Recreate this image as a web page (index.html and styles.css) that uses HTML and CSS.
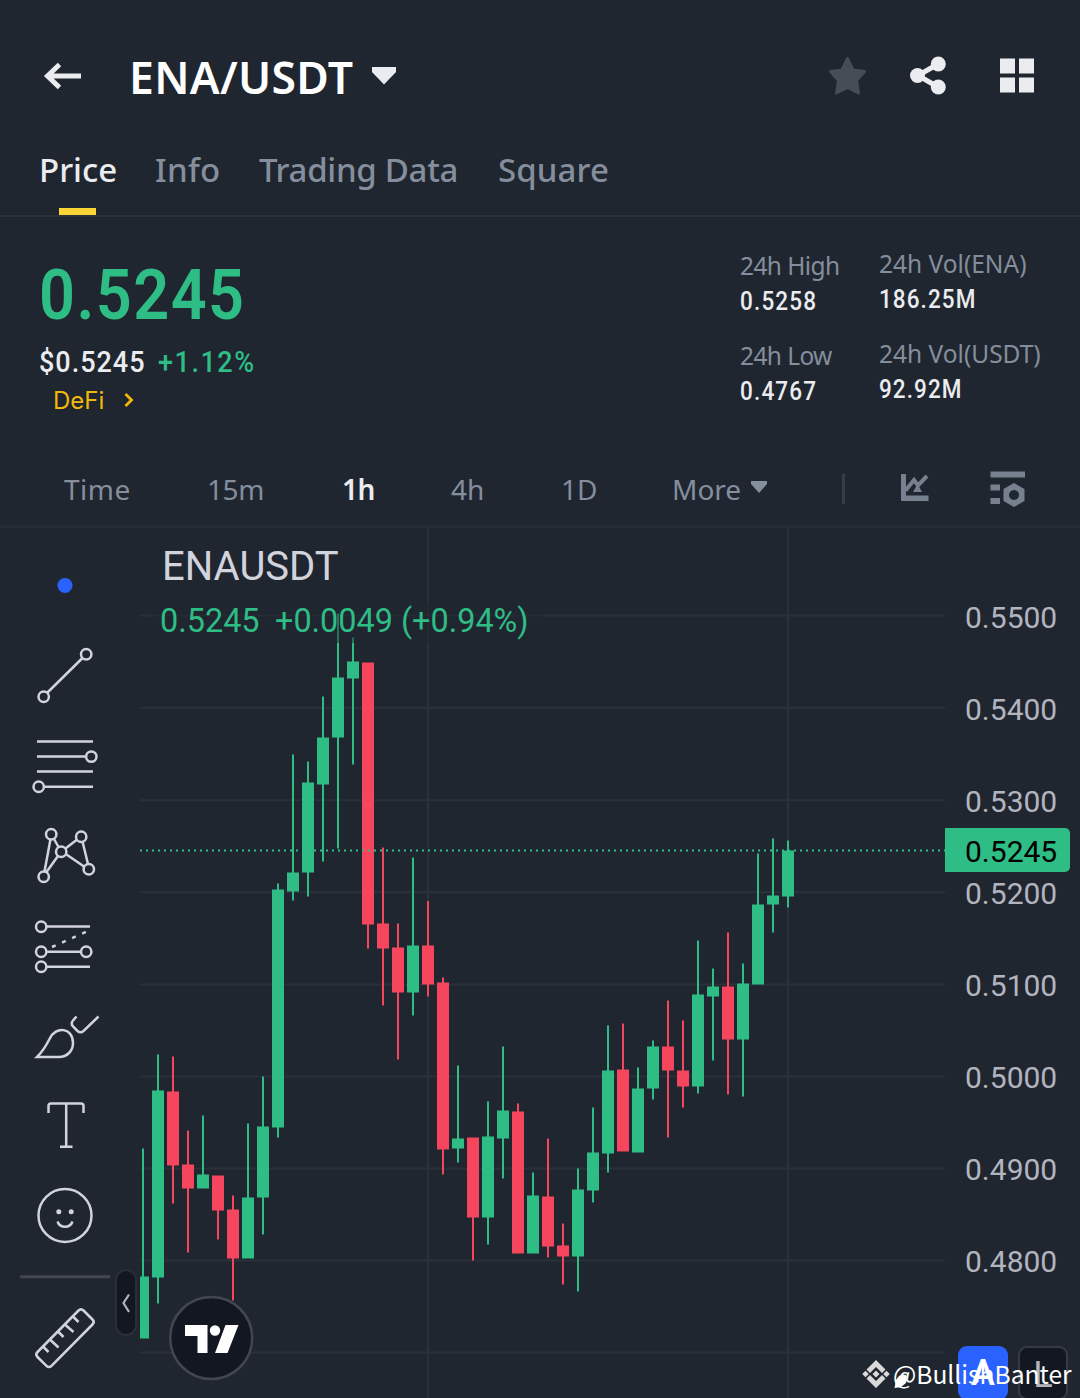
FILE: index.html
```html
<!DOCTYPE html>
<html lang="en">
<head>
<meta charset="utf-8">
<title>ENA/USDT</title>
<link rel="stylesheet" href="styles.css">
</head>
<body>
<main class="app">
  <header class="topbar">
    <svg class="back" width="40" height="34" viewBox="42 59 40 34"><path d="M81 76H49M59.500 64.500L47.500 76L59.500 87.500" fill="none" stroke="#eaecef" stroke-width="5"/></svg>
    <h1 class="pair">ENA/USDT</h1>
    <svg class="caret" width="26" height="20" viewBox="371 66 26 20"><path d="M372 67H396V72L384 84.500L372 72Z" fill="#eaecef"/></svg>
    <div class="actions">
      <svg width="40" height="42" viewBox="828 55.500 40 42"><path d="M847.500 59L853 70.500L864.500 72L856.500 81L858.500 93.500L847.500 88L836.500 93.500L838.500 81L830.500 72L842 70.500Z" fill="#474d57" stroke="#474d57" stroke-width="3" stroke-linejoin="round"/></svg>
      <svg width="40" height="42" viewBox="908 55 40 42"><path d="M938 64L918 75.500L938 87" fill="none" stroke="#eaecef" stroke-width="5"/><circle cx="938.300" cy="64" r="7.500" fill="#eaecef"/><circle cx="917.500" cy="75.500" r="7.500" fill="#eaecef"/><circle cx="938.300" cy="87" r="7.500" fill="#eaecef"/></svg>
      <svg width="36" height="36" viewBox="999 58 36 36"><path d="M1000 58.500h15v15h-15zM1019 58.500h15v15h-15zM1000 77.500h15v15h-15zM1019 77.500h15v15h-15z" fill="#eaecef"/></svg>
    </div>
  </header>

  <nav class="tabs">
    <a class="tab tab-price active">Price</a>
    <a class="tab tab-info">Info</a>
    <a class="tab tab-data">Trading Data</a>
    <a class="tab tab-square">Square</a>
  </nav>

  <section class="summary">
    <div class="quote">
      <div class="last">0.5245</div>
      <div class="fiat"><span class="usd">$0.5245</span><span class="change">+1.12%</span></div>
      <div class="tag"><span>DeFi</span><svg width="12" height="16" viewBox="122 394 12 16"><path d="M125.500 395L131.500 401L125.500 407" fill="none" stroke="#f0b90b" stroke-width="2.800"/></svg></div>
    </div>
    <div class="stats stats-range">
      <div class="stat"><span class="label">24h High</span><span class="value">0.5258</span></div>
      <div class="stat"><span class="label">24h Low</span><span class="value">0.4767</span></div>
    </div>
    <div class="stats stats-volume">
      <div class="stat"><span class="label">24h Vol(ENA)</span><span class="value">186.25M</span></div>
      <div class="stat"><span class="label">24h Vol(USDT)</span><span class="value">92.92M</span></div>
    </div>
  </section>

  <nav class="intervals">
    <span class="iv iv-time">Time</span>
    <span class="iv iv-15m">15m</span>
    <span class="iv iv-1h active">1h</span>
    <span class="iv iv-4h">4h</span>
    <span class="iv iv-1d">1D</span>
    <span class="iv iv-more">More<svg width="18" height="14" viewBox="750 482 18 14"><path d="M751 482H767V485L759 494L751 485Z" fill="#848e9c"/></svg></span>
    <i class="sep"></i>
    <svg class="tool-style" width="28" height="30" viewBox="901 474.500 28 30"><path d="M901 474.500h5v21.500h22.500v5.500H901z" fill="#76808f"/><path d="M905.500 491L914 480.500L918 486L927 476.500" fill="none" stroke="#76808f" stroke-width="4"/><path d="M917.500 484.500L922 492.500H913Z" fill="#76808f"/></svg>
    <svg class="tool-settings" width="36" height="38" viewBox="990 470 36 38"><path d="M990.500 471.500H1025v6H990.500zM990.500 484.500h9.500v6h-9.500zM990.500 498h9.500v6h-9.500z" fill="#76808f"/><path fill-rule="evenodd" d="M1014 483L1024.500 489V501L1014 507L1003.500 501V489ZM1014 490a5 5 0 1 0 .01 0z" fill="#76808f"/></svg>
  </nav>

  <section class="chart">
    <aside class="drawbar">
      <svg class="tool" viewBox="0 540 140 90"><circle cx="65" cy="585.500" r="7.500" fill="#2962ff"/></svg>
      <svg class="tool" viewBox="0 630 140 90"><path d="M47.500 692.500L82.500 658"/><circle cx="86.200" cy="654.300" r="5.200"/><circle cx="43.700" cy="696.700" r="5.200"/></svg>
      <svg class="tool" viewBox="0 720 140 90"><path d="M37 741.500H93M37 756.500H86M37 771.500H93M44 786.700H93"/><circle cx="91.300" cy="756.600" r="5.200"/><circle cx="38.700" cy="786.700" r="5.200"/></svg>
      <svg class="tool" viewBox="0 810 140 90"><path d="M50.500 839L44.500 871.500M54 839L58.500 847M65.500 848.500L76.500 840M58 856L46.500 872M66.500 854.500L84 866.500M82.500 841.500L88 864"/><circle cx="51.200" cy="834.200" r="5.200"/><circle cx="81.200" cy="836.700" r="5.200"/><circle cx="61.200" cy="851.800" r="5.200"/><circle cx="43.700" cy="876.700" r="5.200"/><circle cx="88.800" cy="869.300" r="5.200"/></svg>
      <svg class="tool" viewBox="0 900 140 90"><path d="M47 926.500H90M47 951.800H80M47 966.800H90"/><path d="M52 947L88 931" stroke-dasharray="4 7"/><circle cx="41.200" cy="926.700" r="5.200"/><circle cx="41.200" cy="951.700" r="5.200"/><circle cx="86.200" cy="951.700" r="5.200"/><circle cx="41.200" cy="966.800" r="5.200"/></svg>
      <svg class="tool" viewBox="0 990 140 90"><path d="M37 1057C44 1050 46 1046 49.500 1039C55 1026 73 1027 73 1043C73 1051 67 1057 59 1057ZM76.500 1016.500L73 1020.500Q70.500 1023.500 73 1026.500L77.500 1031Q80.500 1033.500 83.500 1031L98.500 1016.500"/></svg>
      <svg class="tool" viewBox="0 1080 140 90"><path d="M48.500 1113V1106Q48.500 1103.500 51 1103.500H81Q83.500 1103.500 83.500 1106V1113M66.200 1104V1146.500M60 1146.800H72.500"/></svg>
      <svg class="tool" viewBox="0 1170 140 90"><circle cx="65" cy="1215.500" r="26.500"/><circle cx="58.800" cy="1211.800" r="2.500" class="dot"/><circle cx="71.200" cy="1211.800" r="2.500" class="dot"/><path d="M57.500 1221.500C60 1228.500 70 1228.500 72.500 1221.500"/></svg>
      <svg class="tool tool-last" viewBox="0 1260 140 138"><path d="M20 1276.800H110" stroke="#434651" stroke-width="3"/><path d="M78.500 1310.500Q81 1308.200 83.500 1310.500L92.500 1319.500Q95 1322 92.500 1324.500L51.500 1365.800Q49 1368.200 46.500 1365.800L37.500 1357Q35 1354.500 37.500 1352ZM43.500 1347L48.500 1352M50.500 1340L58.500 1347.500M58.500 1332L63.500 1337M65.500 1325L73.500 1332M73.500 1317L78.500 1322"/></svg>
      <div class="collapse"><svg width="10" height="20" viewBox="121 1292 10 20"><path d="M129 1293.500L123.500 1302L129 1311" fill="none" stroke="#b2b5be" stroke-width="2.200"/></svg></div>
    </aside>

    <div class="plot">
      <svg class="candles" viewBox="140 528 805 870">
        <path class="grid" d="M140 615.500H945M140 707.700H945M140 800.300H945M140 892.300H945M140 984.500H945M140 1076.500H945M140 1168.500H945M140 1260.500H945M140 1352.500H945M428 528V1398M788 528V1398"/>
        <path class="up wick" d="M143 1148.500V1338M158 1054.500V1303.500M203 1115.500V1188M248 1123.500V1258M263 1076.500V1234.500M278 883.500V1137.500M293 754.500V900.500M308 761.500V896.500M323 696.500V861.500M338 613.500V848.500M353 637.500V764.500M413 857.500V1015.500M458 1065.500V1162.500M488 1101.500V1244.500M503 1046.500V1178.500M533 1172.500V1253M578 1168.500V1291.500M593 1107.500V1202.500M608 1025.500V1172.500M638 1067.500V1152M653 1040.500V1099.500M698 940.500V1093.500M713 968.500V1060.500M743 963.500V1096.500M758 853.500V984M773 838.500V932.500M788 840.500V907.500"/>
        <path class="up body" d="M143 1276.500V1338.500M158 1090.500V1277.500M203 1174.500V1188.500M248 1197.500V1258.500M263 1126.500V1197.500M278 889.500V1127.500M293 872.500V891.500M308 782.500V872.500M323 737.500V784.500M338 677.500V737.500M353 661.500V678.500M413 945.500V992.500M458 1138.500V1148.500M488 1136.500V1217.500M503 1110.500V1138.500M533 1195.500V1253.500M578 1189.500V1256.500M593 1152.500V1190.500M608 1070.500V1153.500M638 1088.500V1152.500M653 1046.500V1088.500M698 994.500V1086.500M713 986.500V996.500M743 983.500V1039.500M758 904.500V984.500M773 895.500V904.500M788 850.500V896.500"/>
        <path class="down wick" d="M173 1056.500V1203.500M188 1130.500V1252.500M218 1176V1239.500M233 1195.500V1300.500M368 663V948.500M383 847.500V1005.500M398 923.500V1059.500M428 901V996.500M443 977.500V1174.500M473 1138V1260.500M518 1103.500V1253M548 1138.500V1257.500M563 1223.500V1284.500M623 1023.500V1151M668 1000.500V1137.500M683 1020.500V1107.500M728 932.500V1094.500"/>
        <path class="down body" d="M173 1091.500V1165.500M188 1164.500V1188.500M218 1175.500V1210.500M233 1209.500V1258.500M368 662.500V924.500M383 923.500V948.500M398 947.500V992.500M428 945.500V984.500M443 982.500V1149.500M473 1137.500V1217.500M518 1111.500V1253.500M548 1196.500V1246.500M563 1245.500V1256.500M623 1069.500V1151.500M668 1046.500V1070.500M683 1070.500V1086.500M728 986.500V1039.500"/>
        <path d="M140 850.500H945" fill="none" stroke="#2ebd85" stroke-width="2" stroke-dasharray="2 4"/>
      </svg>
      <div class="legend">
        <div class="symbol">ENAUSDT</div>
        <div class="ohlc"><span class="price">0.5245</span><span class="delta">+0.0049 (+0.94%)</span></div>
      </div>
      <svg class="brand" width="86" height="86" viewBox="168 1295 86 86"><circle cx="211.200" cy="1338" r="41" fill="#131722" stroke="#434651" stroke-width="2.500"/><path d="M185 1325H207.500V1353H197.500V1336H185ZM225.500 1325H238.500L227.500 1353H215Z" fill="#fff"/><circle cx="215" cy="1330.500" r="5.200" fill="#fff"/></svg>
    </div>

    <aside class="axis">
      <span>0.5500</span><span>0.5400</span><span>0.5300</span><span>0.5200</span><span>0.5100</span><span>0.5000</span><span>0.4900</span><span>0.4800</span>
      <div class="current">0.5245</div>
      <div class="scale"><b class="auto">A</b><b class="log">L</b></div>
    </aside>
  </section>

  <div class="credit">
    <svg width="28" height="28" viewBox="862 1360 28 28"><path d="M876 1360L885.500 1369.500L882 1373L876 1367L870 1373L866.500 1369.500ZM876 1388L885.500 1378.500L882 1375L876 1381L870 1375L866.500 1378.500ZM876 1370.500L879.500 1374L876 1377.500L872.500 1374ZM865.500 1370.700L868.800 1374L865.500 1377.300L862.200 1374ZM886.500 1370.700L889.800 1374L886.500 1377.300L883.200 1374Z" fill="#d9d9d9"/></svg>
    <span class="handle">@BullishBanter</span>
    <svg class="pointer" width="14" height="16" viewBox="894 1373 14 16"><path d="M899 1376Q904 1373 907 1376L906 1383L901 1387L894.500 1388L896 1380Z" fill="#fff"/></svg>
  </div>
</main>
</body>
</html>
```
FILE: styles.css
```css
* { box-sizing: border-box; }
body { margin: 0; background: #202630; }
svg { display: block; flex: none; }
.app { position: relative; width: 1080px; height: 1398px; overflow: hidden; background: #202630; font-family: "Noto Sans", "Open Sans", sans-serif; color: #eaecef; white-space: nowrap; }

.topbar { height: 132px; padding: 20px 45px 0 42px; display: flex; align-items: center; }
.pair { margin: 2px 0 0 47px; width: 242px; font-size: 44.5px; font-weight: 600; line-height: 60px; letter-spacing: .3px; color: #fff; }
.actions { margin-left: auto; display: flex; align-items: center; }
.actions svg:nth-child(2) { margin-left: 40px; }
.actions svg:nth-child(3) { margin-left: 51px; }

.tabs { height: 85px; display: flex; padding-left: 39px; border-bottom: 2px solid #2b3139; font-size: 33px; font-weight: 550; line-height: 76px; color: #848e9c; }
.tab { position: relative; display: block; height: 83px; }
.tab-price { width: 116px; }
.tab-info { width: 104px; letter-spacing: .3px; }
.tab-data { width: 239px; letter-spacing: -.3px; }
.tab-square { letter-spacing: .1px; }
.tab.active { color: #eaecef; }
.tab.active::after { content: ""; position: absolute; left: 20px; bottom: 0; width: 37px; height: 7px; background: #fcd535; }

.summary { height: 237px; padding-left: 39px; display: flex; }
.quote { width: 701px; padding-top: 33px; font-family: Roboto, sans-serif; }
.last { font-size: 70px; line-height: 90px; font-weight: 600; letter-spacing: 1.6px; transform: scaleX(.9); transform-origin: 0 50%; color: #2ebd85; }
.fiat { display: flex; font-size: 30px; line-height: 44px; font-weight: 500; }
.usd { width: 119px; letter-spacing: 1.1px; transform: scaleX(.9); transform-origin: 0 50%; }
.change { letter-spacing: 1.7px; transform: scaleX(.9); transform-origin: 0 50%; color: #2ebd85; }
.tag { display: flex; align-items: center; gap: 18px; padding-left: 14px; height: 34px; font-family: Inter, sans-serif; font-size: 24px; color: #f0b90b; }
.tag span { margin-top: -1px; }
.stats-range { width: 139px; padding-top: 31px; }
.stats-volume { padding-top: 29px; }
.stat { height: 90px; display: flex; flex-direction: column; }
.label { font-size: 24.5px; line-height: 36px; color: #848e9c; }
.stats-range .label { letter-spacing: -.6px; }
.value { font-family: Roboto, sans-serif; font-size: 25px; line-height: 36px; font-weight: 500; letter-spacing: 1.3px; transform: scaleX(.9); transform-origin: 0 50%; }
.stats-volume .value { letter-spacing: 1.2px; }

.intervals { height: 74px; padding: 0 0 2px 64px; display: flex; align-items: center; border-bottom: 3px solid #262c36; font-size: 28px; color: #848e9c; }
.iv { display: flex; align-items: center; gap: 9px; }
.iv.active { color: #eaecef; font-weight: 600; }
.iv-time { width: 143px; letter-spacing: .5px; }
.iv-15m { width: 135px; letter-spacing: -.4px; }
.iv-1h { width: 109px; letter-spacing: -.5px; }
.iv-4h { width: 110px; }
.iv-1d { width: 111px; }
.iv-more { width: 170px; }
.iv-more svg { margin-bottom: 2px; }
.sep { width: 3px; height: 30px; background: #363d48; }
.tool-style { margin-left: 56px; }
.tool-settings { margin-left: 61px; }

.chart { height: 870px; display: flex; font-family: Roboto, sans-serif; }
.drawbar { position: relative; width: 140px; padding-top: 12px; }
.tool { width: 140px; height: 90px; fill: none; stroke: #d1d4dc; stroke-width: 2.5; }
.tool-last { height: 138px; }
.tool circle[fill] { stroke: none; }
.tool .dot { fill: #d1d4dc; stroke: none; }
.collapse { position: absolute; left: 115px; top: 741px; width: 22px; height: 67px; border: 2px solid #2a2e39; border-radius: 11px; background: #131722; display: flex; align-items: center; justify-content: center; }
.plot { position: relative; width: 805px; }
.candles { width: 805px; height: 870px; }
.grid { fill: none; stroke: #2b313b; stroke-width: 2; }
.wick { stroke-width: 2; }
.body { stroke-width: 12; }
.up { stroke: #2ebd85; }
.down { stroke: #f6465d; }
.legend { position: absolute; left: 10px; top: 8px; }
.symbol { padding-left: 12px; height: 66px; line-height: 62px; font-size: 40px; color: #d1d4dc; }
.ohlc { width: 392px; padding-left: 10px; height: 41px; line-height: 39px; font-size: 32.4px; color: #2ebd85; background: rgba(32, 38, 48, .5); display: flex; }
.price { width: 115px; }
.brand { position: absolute; left: 28px; top: 767px; }
.axis { position: relative; width: 135px; padding: 43.5px 0 0 20px; font-size: 30px; color: #b2b5be; }
.axis span { display: block; height: 92px; line-height: 92px; }
.current { position: absolute; left: 0; top: 300px; width: 125px; height: 44px; padding-left: 20px; line-height: 47px; border-radius: 0 5px 5px 0; background: #2ebd85; color: #000; }
.scale { position: absolute; left: 13px; top: 818px; display: flex; gap: 10px; }
.scale b { width: 50px; height: 54px; border-radius: 9px; text-align: center; line-height: 54px; font-size: 36px; font-weight: 500; }
.auto { background: #2962ff; color: #fff; }
.scale .log { background: #131722; border: 2px solid #363a45; color: #b2b5be; font-weight: 400; }
.credit { position: absolute; left: 862px; top: 1360px; height: 28px; display: flex; align-items: center; gap: 3px; font-family: "Noto Sans CJK SC", sans-serif; font-size: 24.6px; line-height: 28px; color: #fff; }
.handle { margin-top: -3px; }
.pointer { position: absolute; left: 32px; top: 13px; }
```
